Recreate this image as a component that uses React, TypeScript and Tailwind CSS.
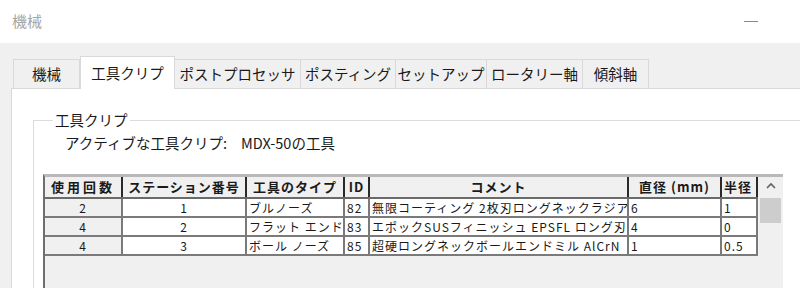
const tabs = ['機械', '工具クリプ', 'ポストプロセッサ', 'ポスティング', 'セットアップ', 'ロータリー軸', '傾斜軸']
const tabWidths = ['w-[67px]', 'w-[95px]', 'w-[127px]', 'w-[96px]', 'w-[92px]', 'w-[97px]', 'w-[67px]']

const columns = ['使用回数', 'ステーション番号', '工具のタイプ', 'ID', 'コメント', '直径 (mm)', '半径']
const colWidths = ['w-[78px]', 'w-[124px]', 'w-[98px]', 'w-[25px]', 'w-[259px]', 'w-[93px]', 'w-[36px]']

const rows = [
  ['2', '1', 'ブルノーズ', '82', '無限コーティング 2枚刃ロングネックラジア', '6', '1'],
  ['4', '2', 'フラット エンド', '83', 'エポックSUSフィニッシュ EPSFL ロング刃', '4', '0'],
  ['4', '3', 'ボール ノーズ', '85', '超硬ロングネックボールエンドミル AlCrN', '1', '0.5'],
]

export default function App() {
  return (
    <div className="w-[800px] h-[288px] overflow-hidden flex flex-col bg-[#f0f0f0] text-[#1a1a1a] font-['Noto_Sans_CJK_JP','Liberation_Sans',sans-serif]">
      {/* title bar */}
      <div className="h-[43px] shrink-0 bg-white flex items-center justify-between pl-[12px] pr-[42px]">
        <span className="text-[15px] text-[#a6a6a6]">機械</span>
        <span className="block w-[14px] h-px bg-[#8a8a8a]" />
      </div>

      {/* tabs */}
      <div className="h-[45px] shrink-0 flex items-end pl-[13px]">
        {tabs.map((t, i) => (
          <div
            key={t}
            className={
              i === 1
                ? `${tabWidths[i]} h-[33px] -mb-px bg-white border border-b-0 border-[#d9d9d9] flex items-center justify-center text-[14.5px] relative z-10`
                : `${tabWidths[i]} h-[29px] bg-[#f0f0f0] border border-b-0 border-[#d9d9d9] -ml-px first:ml-0 flex items-center justify-center text-[14.5px]`
            }
          >
            {t}
          </div>
        ))}
      </div>

      {/* panel */}
      <div className="flex-1 ml-[11px] bg-white border-t border-l border-[#d9d9d9] pl-[21px] pt-[22px]">
        <fieldset className="border-t border-l border-[#dcdcdc] pl-[9px] pb-4">
          <legend className="ml-[10px] px-[2px] text-[14.5px] leading-[18px]">工具クリプ</legend>
          <div className="pl-[22px] mt-[5px] text-[14.5px] leading-[18px]">
            アクティブな工具クリプ:<span className="ml-[14px]">MDX-50の工具</span>
          </div>

          {/* tool table */}
          <div className="mt-[22px] w-[740px] h-[120px] flex border-t-[3px] border-t-[#b9b9b9] border-l-2 border-l-[#6e6e6e] bg-[#f0f0f0]">
            <div className="flex flex-col text-[12px]">
              <div className="flex h-[22px] border-b-2 border-[#6a6a6a]">
                {columns.map((c, i) => (
                  <div
                    key={c}
                    className={`${colWidths[i]} shrink-0 overflow-hidden whitespace-nowrap border-r-2 border-[#2a2a2a] bg-[#f0f0f0] flex items-center justify-center font-bold text-[13px] ${i === 0 ? 'tracking-[3px]' : 'tracking-[1px]'} ${i === 6 ? 'justify-start pl-[2px] border-r-0' : ''}`}
                  >
                    {c}
                  </div>
                ))}
              </div>
              {rows.map((r, ri) => (
                <div key={ri} className="flex h-[19px] border-b-2 border-[#7a7a7a]">
                  {r.map((v, i) => (
                    <div
                      key={i}
                      className={`${colWidths[i]} shrink-0 overflow-hidden whitespace-nowrap border-r-2 border-[#7a7a7a] flex items-center leading-none tracking-[1px] ${i === 0 ? 'bg-[#f0f0f0] justify-center' : 'bg-white'} ${i === 1 ? 'justify-center' : ''} ${i > 1 ? 'pl-[2px]' : ''} ${i === 6 ? 'border-r-0' : ''}`}
                    >
                      {v}
                    </div>
                  ))}
                </div>
              ))}
            </div>

            {/* scrollbar */}
            <div className="w-[25px] shrink-0 bg-[#f0f0f0] flex flex-col items-center pt-[4px]">
              <svg width="10" height="8" viewBox="0 0 10 8" className="mt-[1px]">
                <polyline points="1,6 5,2 9,6" fill="none" stroke="#606060" strokeWidth="1.6" />
              </svg>
              <div className="mt-[8px] w-[21px] h-[25px] bg-[#cdcdcd]" />
            </div>
          </div>
        </fieldset>
      </div>
    </div>
  )
}
